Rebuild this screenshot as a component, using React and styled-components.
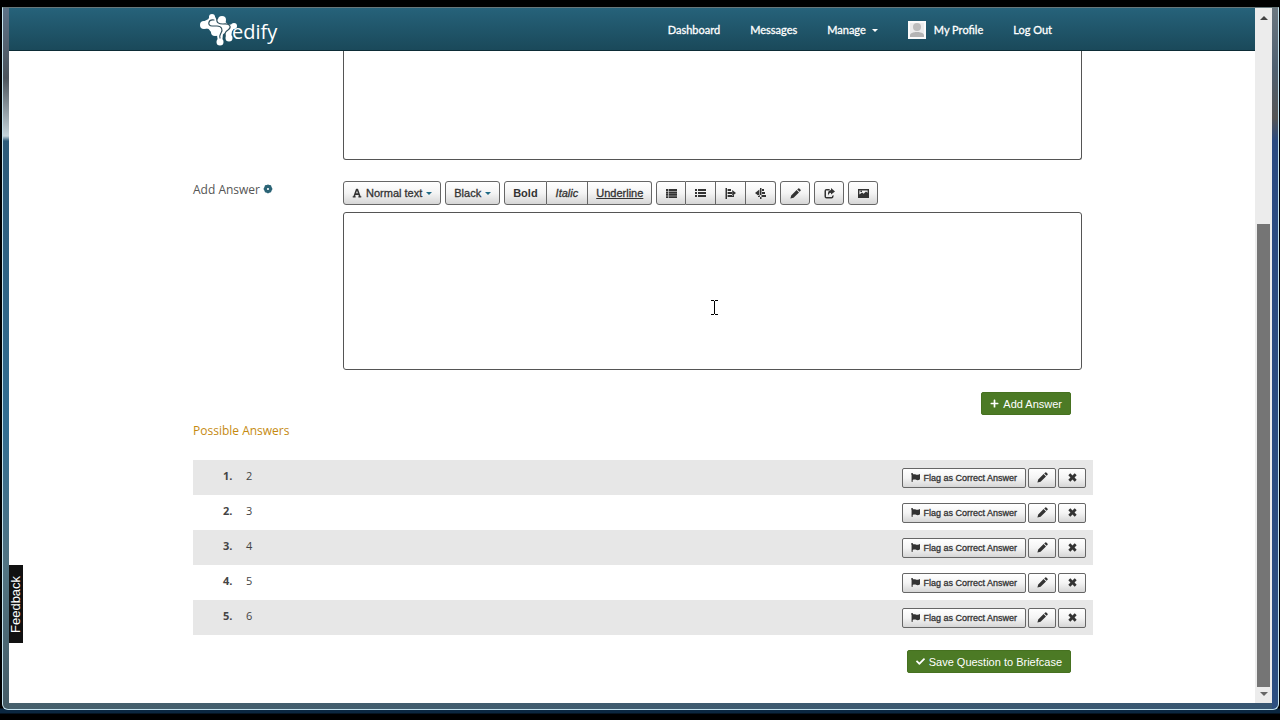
import React, { useState } from 'react';
import styled, { createGlobalStyle, css } from 'styled-components';
import { FaCheck, FaFlag, FaFont, FaPlus } from 'react-icons/fa';

const answers = ['2', '3', '4', '5', '6'];

function Logo() {
  return (
    <LogoLink href="#home" aria-label="edify">
      <svg width="38" height="34" viewBox="0 0 38 34" aria-hidden="true">
        <g fill="#fff">
          <path
            d="M3 10 L9 7 L11 3 L14 4 L16 8 L21 6 L25 10 L28 13 L34 12 L34 14 L31 18 L30 25 L27 24 L25 18 L22 21 L21 30 L19 29 L18 22 L13 20 L9 15 L4 14 Z"
            stroke="#fff"
            strokeWidth="2"
            strokeLinejoin="round"
          />
          <circle cx="12" cy="4" r="3" />
          <circle cx="4" cy="12" r="4" />
          <circle cx="22" cy="7" r="4" />
          <circle cx="15" cy="19" r="4" />
          <circle cx="20" cy="29" r="3.5" />
          <circle cx="29" cy="25" r="3.5" />
          <circle cx="34" cy="13" r="3" />
        </g>
        <g stroke="#2f4f5c" strokeWidth="1.2" fill="none" strokeLinecap="round">
          <path d="M14 7 C8 6 7 13 12 13 L17 13 C22 13 23 17 21 20 C20 22 19 23 20 25" />
          <path d="M17 5 C16 10 19 11 23 11 C30 10 32 14 28 17 C25 19 25 20 25 23" />
        </g>
      </svg>
      <LogoText>edify</LogoText>
    </LogoLink>
  );
}

function Avatar() {
  return (
    <svg width="18" height="18" viewBox="0 0 18 18" aria-hidden="true">
      <rect width="18" height="18" fill="#fafafa" />
      <rect x="2" y="2" width="14" height="14" fill="#ececec" />
      <circle cx="9" cy="6" r="4" fill="#bdbdbd" />
      <path d="M2 16 V14 C3 11 6 12 7 11 H11 C12 12 15 11 16 14 V16 Z" fill="#b4b4b4" />
    </svg>
  );
}

// small glyphs for the toolbar and the answer rows
function Glyph({ d, size = 11 }) {
  return (
    <svg width={size} height={size} viewBox="0 0 11 11" aria-hidden="true">
      <path d={d} fill="currentColor" fillRule="evenodd" />
    </svg>
  );
}

const glyphs = {
  pencil: 'M0.4 10.6 L1.2 7.4 L6.6 2 L9 4.4 L3.6 9.8 Z M7.2 1.4 L8.3 0.4 Q8.8 0 9.3 0.4 L10.6 1.7 Q11 2.2 10.6 2.7 L9.6 3.8 Z',
  thList: 'M0 1 H2 V3 H0 Z M2.6 1 H11 V3 H2.6 Z M0 3.4 H2 V5.4 H0 Z M2.6 3.4 H11 V5.4 H2.6 Z M0 5.8 H2 V7.8 H0 Z M2.6 5.8 H11 V7.8 H2.6 Z M0 8.2 H2 V10 H0 Z M2.6 8.2 H11 V10 H2.6 Z',
  list: 'M0 1 H2 V3 H0 Z M3 1 H11 V3 H3 Z M0 4 H2 V6 H0 Z M3 4 H11 V6 H3 Z M0 7 H2 V9 H0 Z M3 7 H11 V9 H3 Z',
  outdent: 'M0.5 0 H2 V11 H0.5 Z M2.6 1 H6 V3 H2.6 Z M2.6 4 H7 V6 H2.6 Z M2.6 7 H9 V9 H2.6 Z M7.2 2 L11 5 L7.2 8 Z',
  indent: 'M5 0 H6.5 V11 H5 Z M7 1 H9 V3 H7 Z M7 4 H10 V6 H7 Z M3 7 H11 V9 H3 Z M4.4 1.6 L0 5 L4.4 8.4 Z',
  share: 'M6 1 H2.5 Q0.5 1 0.5 3 V8.5 Q0.5 10.5 2.5 10.5 H7.5 Q9.5 10.5 9.5 8.5 V7 L8 8 V9 H2 V2.6 H5 Z M7 0 L11 3.4 L7 6.6 V4.8 Q4.8 4.8 4 7.4 Q3.4 2.4 7 2 Z',
  image: 'M0 1 H11 V10 H0 Z M1.4 2.4 V6.4 L4 4.4 L5.6 5.8 L8 3.4 L9.6 4.8 V2.4 Z M2.4 2.8 H4 V4 H2.4 Z',
  remove: 'M0.4 2.8 L2.8 0.4 L5.5 3 L8.2 0.4 L10.6 2.8 L8 5.5 L10.6 8.2 L8.2 10.6 L5.5 8 L2.8 10.6 L0.4 8.2 L3 5.5 Z',
  help: 'M5.5 0.5 L7 1.2 L8.8 1.5 L9.4 3.4 L10.5 5.5 L9.4 7.4 L8.8 9.2 L7 9.6 L5.5 10.5 L4 9.6 L2.2 9.2 L1.6 7.4 L0.5 5.5 L1.6 3.4 L2.2 1.5 L4 1.2 Z M5.5 4.3 A1.2 1.2 0 1 0 5.5 6.7 A1.2 1.2 0 1 0 5.5 4.3 Z',
};

function Toolbar() {
  return (
    <ToolbarRow role="toolbar" aria-label="Answer formatting">
      <Group>
        <ToolButton type="button" aria-haspopup="menu">
          <FaFont size={10} /> Normal text <Caret $color="#1f6a86" />
        </ToolButton>
      </Group>
      <Group>
        <ToolButton type="button" aria-haspopup="menu">
          Black <Caret $color="#1f6a86" />
        </ToolButton>
      </Group>
      <Group>
        <ToolButton type="button" $strong>Bold</ToolButton>
        <ToolButton type="button" $italic>Italic</ToolButton>
        <ToolButton type="button" $underline>Underline</ToolButton>
      </Group>
      <Group>
        <ToolButton type="button" $icon aria-label="Unordered list"><Glyph d={glyphs.thList} /></ToolButton>
        <ToolButton type="button" $icon aria-label="Ordered list"><Glyph d={glyphs.list} /></ToolButton>
        <ToolButton type="button" $icon aria-label="Outdent"><Glyph d={glyphs.outdent} /></ToolButton>
        <ToolButton type="button" $icon aria-label="Indent"><Glyph d={glyphs.indent} /></ToolButton>
      </Group>
      <Group>
        <ToolButton type="button" $icon aria-label="Edit HTML"><Glyph d={glyphs.pencil} /></ToolButton>
      </Group>
      <Group>
        <ToolButton type="button" $icon aria-label="Insert link"><Glyph d={glyphs.share} /></ToolButton>
      </Group>
      <Group>
        <ToolButton type="button" $icon aria-label="Insert image"><Glyph d={glyphs.image} /></ToolButton>
      </Group>
    </ToolbarRow>
  );
}

function AnswerRow({ number, text }) {
  return (
    <Row>
      <Number>{number}.</Number>
      <Value>{text}</Value>
      <RowActions>
        <RowButton type="button" $wide>
          <FaFlag size={9} /> Flag as Correct Answer
        </RowButton>
        <RowButton type="button" aria-label="Edit answer"><Glyph d={glyphs.pencil} /></RowButton>
        <RowButton type="button" aria-label="Remove answer"><Glyph d={glyphs.remove} size={9} /></RowButton>
      </RowActions>
    </Row>
  );
}

function Scrollbar() {
  return (
    <Track aria-hidden="true">
      <Arrow $up />
      <Thumb />
      <Arrow />
    </Track>
  );
}

export default function App() {
  const [question, setQuestion] = useState('');
  const [answer, setAnswer] = useState('');

  return (
    <Screen>
      <GlobalStyle />
      <Window>
        <Page>
          <NavBar>
            <NavInner>
              <Logo />
              <NavLinks>
                <NavLink href="#dashboard">Dashboard</NavLink>
                <NavLink href="#messages">Messages</NavLink>
                <NavLink href="#manage">Manage <Caret $color="#fff" /></NavLink>
                <NavLink href="#profile"><Avatar /> My Profile</NavLink>
                <NavLink href="#logout">Log Out</NavLink>
              </NavLinks>
            </NavInner>
          </NavBar>

          <Content>
            <Field>
              <Editor
                $clipped
                aria-label="Question"
                value={question}
                onChange={e => setQuestion(e.target.value)}
              />
            </Field>

            <AnswerField>
              <Label htmlFor="answer">Add Answer <Glyph d={glyphs.help} size={10} /></Label>
              <EditorColumn>
                <Toolbar />
                <EditorWrap>
                  <Editor id="answer" value={answer} onChange={e => setAnswer(e.target.value)} />
                  <TextCursor width="7" height="15" viewBox="0 0 7 15" aria-hidden="true">
                    <path d="M0 0.5 H3 M4 0.5 H7 M3.5 1 V14 M0 14.5 H3 M4 14.5 H7" stroke="#000" fill="none" />
                  </TextCursor>
                </EditorWrap>
              </EditorColumn>
            </AnswerField>

            <Actions>
              <GreenButton type="button"><FaPlus size={9} /> Add Answer</GreenButton>
            </Actions>

            <Heading>Possible Answers</Heading>
            <List>
              {answers.map((text, i) => (
                <AnswerRow key={text} number={i + 1} text={text} />
              ))}
            </List>

            <SaveActions>
              <GreenButton type="submit"><FaCheck size={9} /> Save Question to Briefcase</GreenButton>
            </SaveActions>
          </Content>

          <Feedback type="button">Feedback</Feedback>
        </Page>
        <Scrollbar />
      </Window>
    </Screen>
  );
}


// ---------------------------------- styles ----------------------------------

const GlobalStyle = createGlobalStyle`
  * {
    box-sizing: border-box;
  }

  body {
    margin: 0;
    background: #000;
    color: #444;
    font-family: "Open Sans", "Noto Sans", sans-serif;
    font-size: 12px;
  }
`;

const Screen = styled.div`
  min-height: 100vh;
  padding-top: 7px;
  display: flex;
  flex-direction: column;
  background: linear-gradient(to top, #000 6px, #0b2740 7px, #0b2740 11px, #000 12px);
`;

const Window = styled.div`
  flex: 1;
  display: flex;
  margin: 0 1px 10px 2px;
  padding: 0 6px 6px 6px;
  border: 1px solid #c5e4f0;
  border-top: 1px solid #68777a;
  border-radius: 0 0 6px 6px;
  background:
    linear-gradient(#5d7287, #4c545c 70px, #c5d3da 128px, #2d5a78 133px, #326e92 420px, #527482 560px, #455c66) left / 6px 100% no-repeat,
    linear-gradient(#6c7780, #4f6070 60px, #555 110px, #2b4a80 133px, #2c4e80) right / 6px 100% no-repeat,
    linear-gradient(to right, #46606c, #375672);
`;

const Page = styled.div`
  position: relative;
  flex: 1;
  min-width: 0;
  background: #fff;
`;

const NavBar = styled.header`
  height: 43px;
  padding-left: 22px;
  background: linear-gradient(#26627a, #1a495a);
  border-bottom: 1px solid #0c2c36;
`;

const NavInner = styled.div`
  display: flex;
  align-items: center;
  justify-content: space-between;
  width: 100%;
  max-width: 900px;
  height: 100%;
  margin: 0 auto;
  padding: 2px 41px 0 7px;
`;

const LogoLink = styled.a`
  display: flex;
  align-items: center;
  color: #fff;
  text-decoration: none;
`;

const LogoText = styled.span`
  margin-left: -6px;
  padding-top: 4px;
  font-size: 20px;
  line-height: 24px;
`;

const NavLinks = styled.nav`
  display: flex;
  align-items: center;
  gap: 30px;
`;

const NavLink = styled.a`
  display: flex;
  align-items: center;
  gap: 6px;
  color: #fff;
  font-family: Lato, "Open Sans", sans-serif;
  font-size: 11px;
  line-height: 18px;
  text-decoration: none;
  white-space: nowrap;
  -webkit-text-stroke: 0.3px #fff;

  svg {
    margin-right: 2px;
  }
`;

const Caret = styled.span`
  border: 3px solid transparent;
  border-top-color: ${p => p.$color};
  border-bottom: 0;
`;

const Content = styled.main`
  padding-left: 22px;

  & > * {
    max-width: 900px;
    margin-left: auto;
    margin-right: auto;
  }
`;

const Field = styled.div`
  display: flex;
  padding: 0 11px 0 150px;
`;

const AnswerField = styled.div`
  display: flex;
  margin-top: 21px;
  padding-right: 11px;
`;

const Label = styled.label`
  display: flex;
  align-items: center;
  gap: 3px;
  flex: 0 0 150px;
  height: 16px;
  color: #555;
  font-size: 12px;

  svg {
    color: #2b6476;
  }
`;

const EditorColumn = styled.div`
  flex: 1;
  min-width: 0;
`;

const EditorWrap = styled.div`
  position: relative;
  margin-top: 7px;
`;

const Editor = styled.textarea`
  display: block;
  width: 100%;
  height: 158px;
  padding: 6px;
  border: 1px solid #555;
  border-radius: 3px;
  background: #fff;
  font: inherit;
  outline: none;
  resize: none;

  ${p => p.$clipped && css`
    height: 109px;
    border-top: 0;
    border-radius: 0 0 3px 3px;
  `}
`;

const TextCursor = styled.svg`
  position: absolute;
  top: 88px;
  left: 50%;
  transform: translateX(-2px);
  pointer-events: none;
`;

const ToolbarRow = styled.div`
  display: flex;
  gap: 4px;
`;

const grayButton = css`
  display: flex;
  align-items: center;
  justify-content: center;
  border: 1px solid #666;
  background: linear-gradient(#fff, #f4f4f4 50%, #d6d6d6);
  color: #333;
  font-family: "Liberation Sans", Arial, sans-serif;
  white-space: nowrap;
  cursor: pointer;
`;

const Group = styled.div`
  display: flex;

  button + button {
    border-left: 0;
  }

  button:first-child {
    border-top-left-radius: 3px;
    border-bottom-left-radius: 3px;
  }

  button:last-child {
    border-top-right-radius: 3px;
    border-bottom-right-radius: 3px;
  }
`;

const ToolButton = styled.button`
  ${grayButton}
  gap: 4px;
  height: 24px;
  padding: ${p => (p.$icon ? '0' : p.$italic ? '0 9px' : '0 8px')};
  width: ${p => (p.$icon ? '30px' : 'auto')};
  font-size: 11px;
  font-weight: ${p => (p.$strong ? 'bold' : 'normal')};
  font-style: ${p => (p.$italic ? 'italic' : 'normal')};
  text-decoration: ${p => (p.$underline ? 'underline' : 'none')};
  -webkit-text-stroke: ${p => (p.$strong ? '0' : '0.3px #333')};
`;

const Actions = styled.div`
  display: flex;
  justify-content: flex-end;
  margin-top: 22px;
  padding-right: 22px;
`;

const SaveActions = styled(Actions)`
  margin-top: 15px;
`;

const GreenButton = styled.button`
  display: flex;
  align-items: center;
  gap: 4px;
  height: 23px;
  padding: 0 8px;
  border: 1px solid #467120;
  border-radius: 2px;
  background: #4c7a25;
  color: #fff;
  font-family: "Liberation Sans", Arial, sans-serif;
  font-size: 11px;
  white-space: nowrap;
  cursor: pointer;
`;

const Heading = styled.h2`
  margin-top: 6px;
  margin-bottom: 19px;
  color: #c58a10;
  font-size: 12px;
  font-weight: normal;
  line-height: 20px;
`;

const List = styled.ol`
  margin-top: 0;
  margin-bottom: 0;
  padding: 0;
  list-style: none;
`;

const Row = styled.li`
  display: flex;
  align-items: center;
  height: 35px;
  padding: 0 7px 0 30px;

  &:nth-child(odd) {
    background: #e7e7e7;
  }
`;

const Number = styled.span`
  width: 23px;
  padding-bottom: 4px;
  font-size: 11px;
  font-weight: bold;
`;

const Value = styled.span`
  flex: 1;
  padding-bottom: 4px;
  font-size: 11px;
`;

const RowActions = styled.div`
  display: flex;
  gap: 2px;
`;

const RowButton = styled.button`
  ${grayButton}
  gap: 3px;
  width: ${p => (p.$wide ? 'auto' : '28px')};
  height: 20px;
  padding: ${p => (p.$wide ? '0 8px' : '0')};
  border-radius: 2px;
  font-size: 9px;
  -webkit-text-stroke: 0.3px #333;
`;

const Feedback = styled.button`
  position: absolute;
  left: 0;
  bottom: 60px;
  height: 78px;
  width: 14px;
  padding: 0;
  border: 0;
  background: #111;
  color: #fff;
  font-family: "Liberation Sans", Arial, sans-serif;
  font-size: 13px;
  line-height: 14px;
  writing-mode: vertical-rl;
  transform: rotate(180deg);
  cursor: pointer;
`;

const Track = styled.div`
  display: flex;
  flex-direction: column;
  align-items: center;
  width: 17px;
  padding: 8px 0 7px;
  background: #ececec;
`;

const Arrow = styled.span`
  border: 4px solid transparent;
  ${p => (p.$up
    ? 'border-top: 0; border-bottom-color: #444;'
    : 'border-bottom: 0; border-top-color: #666;')}
`;

const Thumb = styled.span`
  flex: 1;
  width: 13px;
  margin: 204px 0 5px;
  background: #757575;
`;
